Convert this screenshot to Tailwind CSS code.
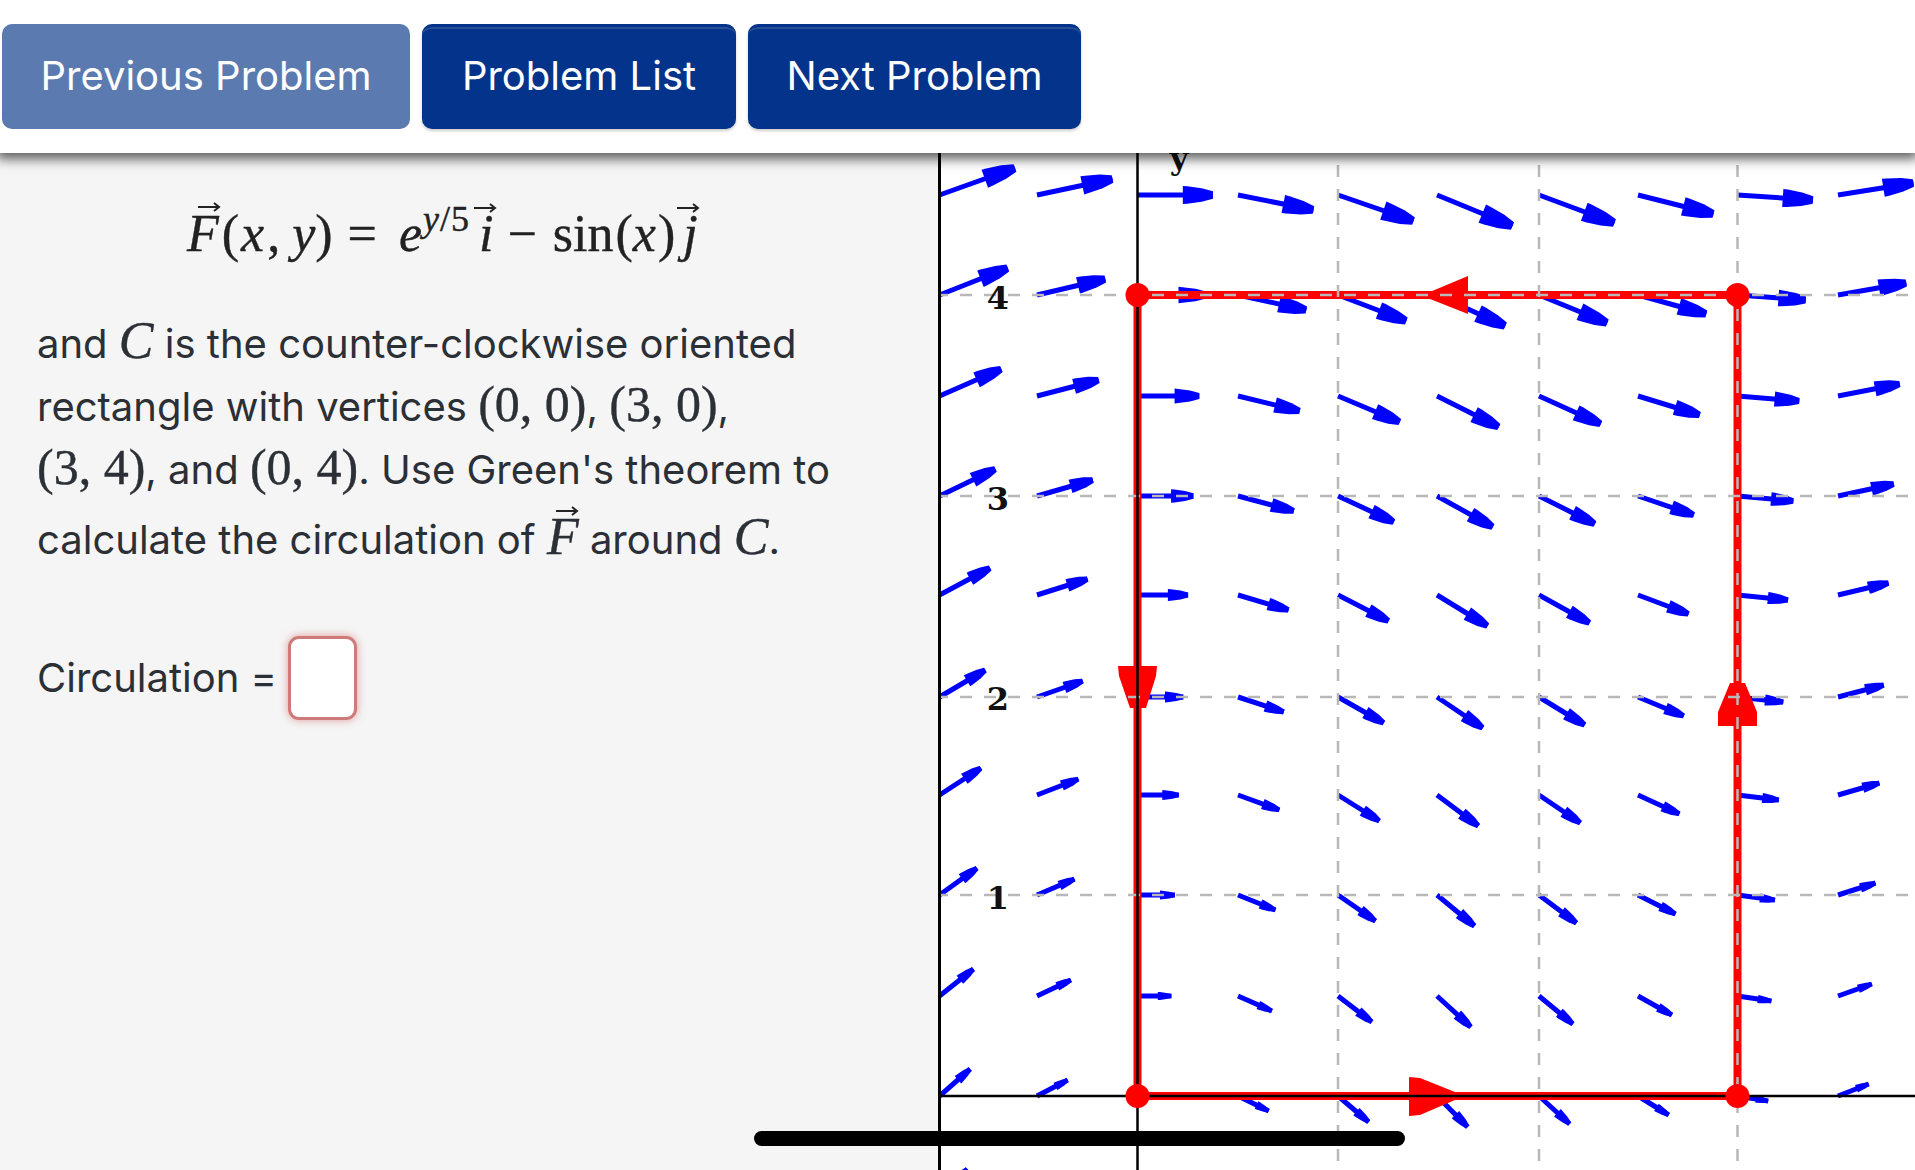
<!DOCTYPE html>
<html>
<head>
<meta charset="utf-8">
<script src="https://cdn.jsdelivr.net/npm/@tailwindcss/browser@4"></script>
</head>
<body class="h-[1170px] w-[1915px] overflow-hidden bg-white font-['Inter',sans-serif]">
<div class="relative flex h-[1170px] w-[1915px] flex-col">
  <header class="relative z-10 flex h-[153px] shrink-0 items-start gap-3 bg-white pl-[2px] pt-[24px] shadow-[0_3px_11px_3px_rgba(0,0,0,0.62)]">
    <button class="h-[105px] w-[408px] rounded-[10px] bg-[#5a7ab0] pb-[2px] text-[40px] text-white">Previous Problem</button>
    <button class="h-[105px] w-[314px] rounded-[10px] border-t-[3px] border-[#03338a] bg-[#03338a] pb-[4px] text-[40px] text-white shadow-[inset_0_2px_0_#2a4f96,0_2px_3px_rgba(0,0,0,0.2)]">Problem List</button>
    <button class="h-[105px] w-[333px] rounded-[10px] border-t-[3px] border-[#03338a] bg-[#03338a] pb-[4px] text-[40px] text-white shadow-[inset_0_2px_0_#2a4f96,0_2px_3px_rgba(0,0,0,0.2)]">Next Problem</button>
  </header>
  <main class="flex min-h-0 flex-1">
    <section class="h-full w-[938px] shrink-0 bg-[#f5f5f5] pl-[37px] pr-4 text-[40px] text-[#2b2f36]">
      <div class="mt-[55px] flex items-baseline pl-[150px] font-['Liberation_Serif',serif] text-[52px] leading-none text-[#222] [-webkit-text-stroke:0.4px_#222]">
        <span class="relative mr-[3px] italic">F<svg class="absolute left-[10px] top-[-7px]" width="24" height="12" viewBox="0 0 24 12"><path d="M1 6h21M17 2l5 4-5 4" fill="none" stroke="#222" stroke-width="2"/></svg></span>
        <span>(</span><span class="ml-[2px] italic">x</span><span class="ml-[3px]">,</span><span class="ml-[12px] italic">y</span><span>)</span>
        <span class="ml-[15px]">=</span>
        <span class="ml-[22px] italic">e</span>
        <span class="relative -top-[20px] ml-[1px] text-[36px] leading-none tracking-[1px]"><span class="italic">y</span>/5</span>
        <span class="relative ml-[9px] italic">i<svg class="absolute left-[-6px] top-[-6px]" width="24" height="12" viewBox="0 0 24 12"><path d="M1 6h21M17 2l5 4-5 4" fill="none" stroke="#222" stroke-width="2"/></svg></span>
        <span class="ml-[14px]">−</span>
        <span class="ml-[16px]">sin</span><span class="ml-[2px]">(</span><span class="italic">x</span><span class="ml-[2px]">)</span>
        <span class="relative ml-[8px] italic">j<svg class="absolute left-[-7px] top-[-6px]" width="24" height="12" viewBox="0 0 24 12"><path d="M1 6h21M17 2l5 4-5 4" fill="none" stroke="#222" stroke-width="2"/></svg></span>
      </div>
      <p class="mt-[50px] leading-[61px]">and <span class="font-['Liberation_Serif',serif] text-[52px] italic [-webkit-text-stroke:0.4px_#2b2f36]">C</span> is the counter-clockwise oriented<br>rectangle with vertices <span class="font-['Liberation_Serif',serif] text-[50px] [-webkit-text-stroke:0.4px_#2b2f36]">(0, 0)</span>, <span class="font-['Liberation_Serif',serif] text-[50px] [-webkit-text-stroke:0.4px_#2b2f36]">(3, 0)</span>,<br><span class="font-['Liberation_Serif',serif] text-[50px] [-webkit-text-stroke:0.4px_#2b2f36]">(3, 4)</span>, and <span class="font-['Liberation_Serif',serif] text-[50px] [-webkit-text-stroke:0.4px_#2b2f36]">(0, 4)</span>. Use Green's theorem to<span class="mt-[6px] block">calculate the circulation of <span class="relative font-['Liberation_Serif',serif] text-[52px] italic [-webkit-text-stroke:0.4px_#2b2f36]">F<svg class="absolute left-[8px] top-[-3px]" width="24" height="12" viewBox="0 0 24 12"><path d="M1 6h21M17 2l5 4-5 4" fill="none" stroke="#222" stroke-width="2"/></svg></span> around <span class="font-['Liberation_Serif',serif] text-[52px] italic [-webkit-text-stroke:0.4px_#2b2f36]">C</span>.</span></p>
      <div class="mt-[66px] flex items-center gap-[11px]">
        <span>Circulation =</span>
        <div class="h-[84px] w-[69px] rounded-[11px] border-[3px] border-[#cd7a78] bg-white shadow-[0_0_9px_rgba(205,80,80,0.55)]"></div>
      </div>
    </section>
    <svg class="block shrink-0" width="977" height="1017" viewBox="938 153 977 1017">
      <defs>
        <g id="a">
          <line x1="0" y1="0" x2="1" y2="0" stroke="#0000ff" stroke-width="5" vector-effect="non-scaling-stroke"/>
          <polygon points="0.6,-0.12 0.66,-0.115 0.85,-0.09 1,-0.05 1,0.05 0.85,0.09 0.66,0.115 0.6,0.12" fill="#0000ff"/>
        </g>
      </defs>
      <rect x="938" y="153" width="977" height="1017" fill="#fff"/>
      <g>
        <use href="#a" transform="matrix(75.5 -27 27 75.5 939.5 195)"/><use href="#a" transform="matrix(75.5 -16 16 75.5 1037 195)"/><use href="#a" transform="matrix(75.5 0 0 75.5 1137.5 195)"/><use href="#a" transform="matrix(75.5 15 -15 75.5 1238 195)"/><use href="#a" transform="matrix(75.5 26 -26 75.5 1338 195)"/><use href="#a" transform="matrix(75.5 31 -31 75.5 1437 195)"/><use href="#a" transform="matrix(75.5 28 -28 75.5 1539 195)"/><use href="#a" transform="matrix(75.5 19 -19 75.5 1638 195)"/><use href="#a" transform="matrix(75.5 5 -5 75.5 1737.5 195)"/><use href="#a" transform="matrix(75.5 -12 12 75.5 1838 195)"/>
        <use href="#a" transform="matrix(68.3 -27 27 68.3 939.5 295)"/><use href="#a" transform="matrix(68.3 -16 16 68.3 1037 295)"/><use href="#a" transform="matrix(68.3 0 0 68.3 1137.5 295)"/><use href="#a" transform="matrix(68.3 15 -15 68.3 1238 295)"/><use href="#a" transform="matrix(68.3 26 -26 68.3 1338 295)"/><use href="#a" transform="matrix(68.3 31 -31 68.3 1437 295)"/><use href="#a" transform="matrix(68.3 28 -28 68.3 1539 295)"/><use href="#a" transform="matrix(68.3 19 -19 68.3 1638 295)"/><use href="#a" transform="matrix(68.3 5 -5 68.3 1737.5 295)"/><use href="#a" transform="matrix(68.3 -12 12 68.3 1838 295)"/>
        <use href="#a" transform="matrix(61.8 -27 27 61.8 939.5 396)"/><use href="#a" transform="matrix(61.8 -16 16 61.8 1037 396)"/><use href="#a" transform="matrix(61.8 0 0 61.8 1137.5 396)"/><use href="#a" transform="matrix(61.8 15 -15 61.8 1238 396)"/><use href="#a" transform="matrix(61.8 26 -26 61.8 1338 396)"/><use href="#a" transform="matrix(61.8 31 -31 61.8 1437 396)"/><use href="#a" transform="matrix(61.8 28 -28 61.8 1539 396)"/><use href="#a" transform="matrix(61.8 19 -19 61.8 1638 396)"/><use href="#a" transform="matrix(61.8 5 -5 61.8 1737.5 396)"/><use href="#a" transform="matrix(61.8 -12 12 61.8 1838 396)"/>
        <use href="#a" transform="matrix(55.9 -27 27 55.9 939.5 496)"/><use href="#a" transform="matrix(55.9 -16 16 55.9 1037 496)"/><use href="#a" transform="matrix(55.9 0 0 55.9 1137.5 496)"/><use href="#a" transform="matrix(55.9 15 -15 55.9 1238 496)"/><use href="#a" transform="matrix(55.9 26 -26 55.9 1338 496)"/><use href="#a" transform="matrix(55.9 31 -31 55.9 1437 496)"/><use href="#a" transform="matrix(55.9 28 -28 55.9 1539 496)"/><use href="#a" transform="matrix(55.9 19 -19 55.9 1638 496)"/><use href="#a" transform="matrix(55.9 5 -5 55.9 1737.5 496)"/><use href="#a" transform="matrix(55.9 -12 12 55.9 1838 496)"/>
        <use href="#a" transform="matrix(50.6 -27 27 50.6 939.5 595)"/><use href="#a" transform="matrix(50.6 -16 16 50.6 1037 595)"/><use href="#a" transform="matrix(50.6 0 0 50.6 1137.5 595)"/><use href="#a" transform="matrix(50.6 15 -15 50.6 1238 595)"/><use href="#a" transform="matrix(50.6 26 -26 50.6 1338 595)"/><use href="#a" transform="matrix(50.6 31 -31 50.6 1437 595)"/><use href="#a" transform="matrix(50.6 28 -28 50.6 1539 595)"/><use href="#a" transform="matrix(50.6 19 -19 50.6 1638 595)"/><use href="#a" transform="matrix(50.6 5 -5 50.6 1737.5 595)"/><use href="#a" transform="matrix(50.6 -12 12 50.6 1838 595)"/>
        <use href="#a" transform="matrix(45.8 -27 27 45.8 939.5 697)"/><use href="#a" transform="matrix(45.8 -16 16 45.8 1037 697)"/><use href="#a" transform="matrix(45.8 0 0 45.8 1137.5 697)"/><use href="#a" transform="matrix(45.8 15 -15 45.8 1238 697)"/><use href="#a" transform="matrix(45.8 26 -26 45.8 1338 697)"/><use href="#a" transform="matrix(45.8 31 -31 45.8 1437 697)"/><use href="#a" transform="matrix(45.8 28 -28 45.8 1539 697)"/><use href="#a" transform="matrix(45.8 19 -19 45.8 1638 697)"/><use href="#a" transform="matrix(45.8 5 -5 45.8 1737.5 697)"/><use href="#a" transform="matrix(45.8 -12 12 45.8 1838 697)"/>
        <use href="#a" transform="matrix(41.4 -27 27 41.4 939.5 795)"/><use href="#a" transform="matrix(41.4 -16 16 41.4 1037 795)"/><use href="#a" transform="matrix(41.4 0 0 41.4 1137.5 795)"/><use href="#a" transform="matrix(41.4 15 -15 41.4 1238 795)"/><use href="#a" transform="matrix(41.4 26 -26 41.4 1338 795)"/><use href="#a" transform="matrix(41.4 31 -31 41.4 1437 795)"/><use href="#a" transform="matrix(41.4 28 -28 41.4 1539 795)"/><use href="#a" transform="matrix(41.4 19 -19 41.4 1638 795)"/><use href="#a" transform="matrix(41.4 5 -5 41.4 1737.5 795)"/><use href="#a" transform="matrix(41.4 -12 12 41.4 1838 795)"/>
        <use href="#a" transform="matrix(37.5 -27 27 37.5 939.5 895)"/><use href="#a" transform="matrix(37.5 -16 16 37.5 1037 895)"/><use href="#a" transform="matrix(37.5 0 0 37.5 1137.5 895)"/><use href="#a" transform="matrix(37.5 15 -15 37.5 1238 895)"/><use href="#a" transform="matrix(37.5 26 -26 37.5 1338 895)"/><use href="#a" transform="matrix(37.5 31 -31 37.5 1437 895)"/><use href="#a" transform="matrix(37.5 28 -28 37.5 1539 895)"/><use href="#a" transform="matrix(37.5 19 -19 37.5 1638 895)"/><use href="#a" transform="matrix(37.5 5 -5 37.5 1737.5 895)"/><use href="#a" transform="matrix(37.5 -12 12 37.5 1838 895)"/>
        <use href="#a" transform="matrix(33.9 -27 27 33.9 939.5 996)"/><use href="#a" transform="matrix(33.9 -16 16 33.9 1037 996)"/><use href="#a" transform="matrix(33.9 0 0 33.9 1137.5 996)"/><use href="#a" transform="matrix(33.9 15 -15 33.9 1238 996)"/><use href="#a" transform="matrix(33.9 26 -26 33.9 1338 996)"/><use href="#a" transform="matrix(33.9 31 -31 33.9 1437 996)"/><use href="#a" transform="matrix(33.9 28 -28 33.9 1539 996)"/><use href="#a" transform="matrix(33.9 19 -19 33.9 1638 996)"/><use href="#a" transform="matrix(33.9 5 -5 33.9 1737.5 996)"/><use href="#a" transform="matrix(33.9 -12 12 33.9 1838 996)"/>
        <use href="#a" transform="matrix(30.7 -27 27 30.7 939.5 1096)"/><use href="#a" transform="matrix(30.7 -16 16 30.7 1037 1096)"/><use href="#a" transform="matrix(30.7 0 0 30.7 1137.5 1096)"/><use href="#a" transform="matrix(30.7 15 -15 30.7 1238 1096)"/><use href="#a" transform="matrix(30.7 26 -26 30.7 1338 1096)"/><use href="#a" transform="matrix(30.7 31 -31 30.7 1437 1096)"/><use href="#a" transform="matrix(30.7 28 -28 30.7 1539 1096)"/><use href="#a" transform="matrix(30.7 19 -19 30.7 1638 1096)"/><use href="#a" transform="matrix(30.7 5 -5 30.7 1737.5 1096)"/><use href="#a" transform="matrix(30.7 -12 12 30.7 1838 1096)"/>
        <use href="#a" transform="matrix(27.8 -27 27 27.8 939.5 1196)"/>
      </g>
      <path d="M1137.5 295H1737.5V1096H1137.5Z" fill="none" stroke="#ff0000" stroke-width="8"/>
      <path d="M1468 276L1425 294V297L1468 314Z M1118 666H1157L1156 676L1146 708H1130L1119 676Z M1718 726H1757V712L1745 683H1730L1718 712Z M1409 1077L1420 1078L1455 1092V1100L1420 1115L1409 1116Z" fill="#ff0000"/>
      <path d="M936 295H1915M936 496H1915M936 697H1915M936 895H1915M1338 141V1170M1539 141V1170M1737.5 141V1170" stroke="#b8b8b8" stroke-width="2.5" stroke-dasharray="12 12" fill="none"/>
      <path d="M939.5 153V1170" stroke="#000" stroke-width="3"/>
      <path d="M1137.5 153V1170M940 1096H1915" stroke="#000" stroke-width="2.5"/>
      <circle cx="1137.5" cy="295" r="12" fill="#ff0000"/><circle cx="1737.5" cy="295" r="12" fill="#ff0000"/><circle cx="1137.5" cy="1096" r="12" fill="#ff0000"/><circle cx="1737.5" cy="1096" r="12" fill="#ff0000"/>
      <g font-family="DejaVu Serif" font-size="32" font-weight="700" fill="#111" text-anchor="middle">
        <text x="998" y="309">4</text><text x="998" y="510">3</text><text x="998" y="710">2</text><text x="998" y="909">1</text>
        <text x="1179" y="169">y</text>
      </g>
    </svg>
  </main>
  <div class="absolute left-[754px] top-[1131px] h-[15px] w-[651px] rounded-full bg-black"></div>
</div>
</body>
</html>
